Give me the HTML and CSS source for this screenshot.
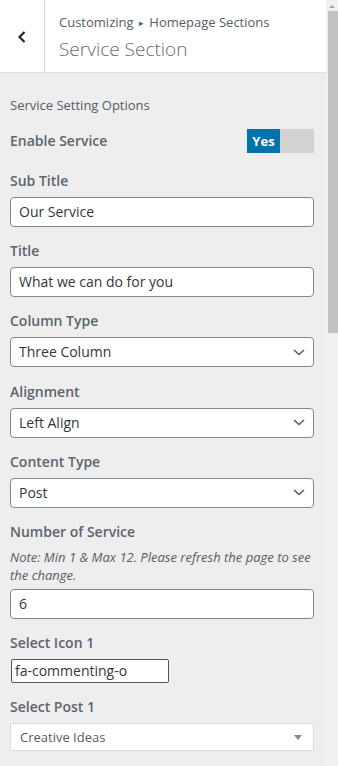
FILE: index.html
```html
<!DOCTYPE html>
<html>
<head>
<meta charset="utf-8">
<link rel="stylesheet" href="styles.css">
</head>
<body>
<div class="app">
  <div class="panel">
    <header class="header">
      <div class="back">
        <svg width="10" height="14" viewBox="0 0 10 14"><polyline points="7.5,2 2.5,7 7.5,12" fill="none" stroke="#23282d" stroke-width="2.2"/></svg>
      </div>
      <div class="titles">
        <div class="crumb">Customizing <span class="tri">▸</span> Homepage Sections</div>
        <div class="title">Service Section</div>
      </div>
    </header>
    <main class="content">
      <div class="section-desc">Service Setting Options</div>
      <div class="toggle-row">
        <span class="label">Enable Service</span>
        <span class="toggle"><span class="on">Yes</span><span class="off"></span></span>
      </div>
      <div class="field">
        <div class="label">Sub Title</div>
        <div class="input">Our Service</div>
      </div>
      <div class="field">
        <div class="label">Title</div>
        <div class="input">What we can do for you</div>
      </div>
      <div class="field">
        <div class="label">Column Type</div>
        <div class="input select">Three Column<svg class="chev" width="12" height="7" viewBox="0 0 12 7"><polyline points="1,1 6,5.5 11,1" fill="none" stroke="#555d66" stroke-width="1.6"/></svg></div>
      </div>
      <div class="field">
        <div class="label">Alignment</div>
        <div class="input select">Left Align<svg class="chev" width="12" height="7" viewBox="0 0 12 7"><polyline points="1,1 6,5.5 11,1" fill="none" stroke="#555d66" stroke-width="1.6"/></svg></div>
      </div>
      <div class="field">
        <div class="label">Content Type</div>
        <div class="input select">Post<svg class="chev" width="12" height="7" viewBox="0 0 12 7"><polyline points="1,1 6,5.5 11,1" fill="none" stroke="#555d66" stroke-width="1.6"/></svg></div>
      </div>
      <div class="field">
        <div class="label">Number of Service</div>
        <div class="note">Note: Min 1 &amp; Max 12. Please refresh the page to see the change.</div>
        <div class="input">6</div>
      </div>
      <div class="field">
        <div class="label">Select Icon 1</div>
        <div class="small-input">fa-commenting-o</div>
      </div>
      <div class="field">
        <div class="label">Select Post 1</div>
        <div class="select2">Creative Ideas<span class="arrow"></span></div>
      </div>
    </main>
  </div>
  <div class="scrollbar">
    <div class="sb-arrow"></div>
    <div class="sb-thumb"></div>
  </div>
</div>
</body>
</html>
```
FILE: styles.css
```css
html, body {
  margin: 0;
  padding: 0;
  overflow: hidden;
}
body {
  font-family: "Open Sans", "Noto Sans", sans-serif;
  color: #555d66;
  background: #eee;
}
.app {
  display: flex;
  width: 338px;
  height: 766px;
}
.panel {
  width: 326px;
  height: 766px;
  overflow: hidden;
  background: #eee;
}
.header {
  display: flex;
  height: 72px;
  background: #fff;
  border-bottom: 1px solid #ddd;
}
.back {
  width: 45px;
  border-right: 1px solid #ddd;
  display: flex;
  align-items: center;
  justify-content: center;
  padding-top: 2px;
  box-sizing: border-box;
}
.titles {
  padding: 12px 0 0 14px;
}
.crumb {
  font-size: 13px;
  line-height: 20px;
  color: #555d66;
}
.tri {
  font-size: 9px;
  position: relative;
  top: -1px;
  padding: 0 2px;
}
.title {
  font-size: 19px;
  font-weight: 300;
  line-height: 28px;
  color: #656d75;
  margin-top: 1px;
}
.content {
  padding: 22px 12px 0 10px;
}
.section-desc {
  font-size: 13px;
  line-height: 20px;
  margin-bottom: 14px;
}
.label {
  font-size: 14px;
  font-weight: 600;
  line-height: 20px;
  color: #5c646c;
}
.toggle-row {
  display: flex;
  justify-content: space-between;
  align-items: center;
  height: 24px;
  margin-bottom: 18px;
}
.toggle {
  display: flex;
  width: 67px;
  height: 24px;
}
.toggle .on {
  width: 33px;
  background: #0073aa;
  color: #fff;
  font-size: 13px;
  font-weight: 700;
  display: flex;
  align-items: center;
  justify-content: center;
}
.toggle .off {
  flex: 1;
  background: #d3d3d3;
}
.field {
  margin-bottom: 14.2px;
}
.field .label {
  margin-bottom: 6px;
}
.input {
  height: 30px;
  box-sizing: border-box;
  background: #fff;
  border: 1px solid #7e8993;
  border-radius: 4px;
  font-size: 14px;
  line-height: 28px;
  color: #32373c;
  padding: 0 8px;
  display: flex;
  align-items: center;
  justify-content: space-between;
}
.note {
  font-size: 13px;
  font-style: italic;
  line-height: 18px;
  margin: 0 0 5px;
}
.small-input {
  width: 158px;
  height: 24px;
  box-sizing: border-box;
  background: #fff;
  border: 1px solid #555;
  border-radius: 2px;
  font-size: 14px;
  line-height: 22px;
  color: #32373c;
  padding: 0 3px;
  margin-left: 1px;
}
.select2 {
  height: 28px;
  box-sizing: border-box;
  background: #fff;
  border: 1px solid #ddd;
  font-size: 13px;
  line-height: 26px;
  color: #555d66;
  padding: 0 9px;
  display: flex;
  align-items: center;
  justify-content: space-between;
}
.arrow {
  width: 0;
  height: 0;
  border-left: 4px solid transparent;
  border-right: 4px solid transparent;
  border-top: 5px solid #888;
  margin-right: 2px;
}
.scrollbar {
  width: 12px;
  height: 766px;
  background: #f1f1f1;
  display: flex;
  flex-direction: column;
  align-items: flex-end;
}
.sb-arrow {
  width: 0;
  height: 0;
  border-left: 3px solid transparent;
  border-right: 3px solid transparent;
  border-bottom: 3px solid #a3a3a3;
  margin: 5px 3px 3px 0;
}
.sb-thumb {
  width: 10px;
  height: 322px;
  background: #c1c1c1;
}
```
